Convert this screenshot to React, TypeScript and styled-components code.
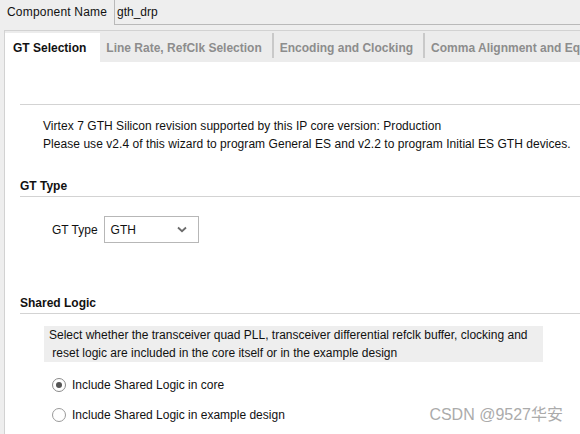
import React from "react";
import styled, { createGlobalStyle } from "styled-components";

const GlobalStyle = createGlobalStyle`
  html, body {
    margin: 0;
    padding: 0;
    background: #eeeeee;
    overflow: hidden;
  }
  body {
    font-family: "Liberation Sans", Arial, sans-serif;
    font-size: 12px;
    color: #111;
  }
`;

const Page = styled.div`
  position: relative;
  width: 580px;
  height: 434px;
  overflow: hidden;
`;

const TopBar = styled.div`
  display: flex;
  height: 25px;
`;

const NameLabel = styled.div`
  padding-left: 7px;
  width: 107px;
  line-height: 24px;
  letter-spacing: 0.2px;
`;

const NameInput = styled.div`
  flex: 1;
  border-left: 1px solid #b9b9b9;
  border-bottom: 1px solid #b9b9b9;
  padding-left: 2px;
  line-height: 24px;
`;

const Panel = styled.div`
  margin: 5px 0 0 4px;
  border-top: 1px solid #d2d2d2;
  border-left: 1px solid #d2d2d2;
  height: 420px;
  background: #fff;
  display: flex;
  flex-direction: column;
`;

const TabStrip = styled.div`
  display: flex;
  background: #ececec;
  padding-top: 2px;
  height: 29px;
  white-space: nowrap;
  overflow: hidden;
`;

const Tab = styled.div<{ $active?: boolean }>`
  position: relative;
  display: flex;
  align-items: center;
  padding: 0 ${(p) => (p.$active ? 14 : 12)}px 0 ${(p) => (p.$active ? 8 : 6)}px;
  font-weight: bold;
  color: ${(p) => (p.$active ? "#111" : "#8d8d8d")};
  background: ${(p) => (p.$active ? "#fff" : "transparent")};

  &::after {
    content: "";
    display: ${(p) => (p.$active ? "none" : "block")};
    position: absolute;
    right: 0;
    top: 0;
    height: 25px;
    width: 2px;
    background: #c9c9c9;
  }
  &:last-child::after {
    display: none;
  }
`;

const Body = styled.div`
  padding-left: 15px;
`;

const SectionHeading = styled.div<{ $top: number }>`
  margin-top: ${(p) => p.$top}px;
  height: 18px;
  line-height: 18px;
  padding-bottom: 1px;
  font-weight: bold;
  border-bottom: 1px solid #d3d3d3;
`;

const Intro = styled.div`
  margin: 12px 0 0 23px;
  line-height: 18px;
  letter-spacing: 0.05px;
`;

const FieldRow = styled.div`
  display: flex;
  align-items: center;
  margin: 19px 0 0 32px;
  gap: 6px;
`;

const Combo = styled.div`
  box-sizing: border-box;
  width: 95px;
  height: 27px;
  border: 1px solid #b7b7b7;
  display: flex;
  align-items: center;
  justify-content: space-between;
  padding: 0 11px 0 6px;
`;

const Note = styled.div`
  margin: 12px 0 0 24px;
  width: 499px;
  background: #eeeeee;
  line-height: 18px;
  padding-left: 5px;
  box-sizing: border-box;
  white-space: pre;
`;

const RadioRow = styled.label<{ $gap: number }>`
  display: flex;
  align-items: center;
  gap: 6px;
  margin: ${(p) => p.$gap}px 0 0 32px;
  line-height: 18px;
`;

const RadioDot = styled.span<{ $checked?: boolean }>`
  box-sizing: border-box;
  width: 14px;
  height: 14px;
  border-radius: 50%;
  border: 1px solid ${(p) => (p.$checked ? "#8a8a8a" : "#9a9a9a")};
  background: #fff;
  display: flex;
  align-items: center;
  justify-content: center;

  &::after {
    content: "";
    display: ${(p) => (p.$checked ? "block" : "none")};
    width: 6px;
    height: 6px;
    border-radius: 50%;
    background: #555;
  }
`;

const Watermark = styled.div`
  position: absolute;
  right: 17px;
  bottom: 9px;
  font-family: "Liberation Sans", "Noto Sans CJK SC", sans-serif;
  font-size: 16px;
  color: #ababab;
`;

const Chevron = () => (
  <svg width="10" height="7" viewBox="0 0 10 7">
    <path d="M1 1.5 L5 5.2 L9 1.5" fill="none" stroke="#6b6b6b" strokeWidth="1.8" />
  </svg>
);

export default function App() {
  return (
    <Page>
      <GlobalStyle />
      <TopBar>
        <NameLabel>Component Name</NameLabel>
        <NameInput>gth_drp</NameInput>
      </TopBar>
      <Panel>
        <TabStrip>
          <Tab $active>GT Selection</Tab>
          <Tab>Line Rate, RefClk Selection</Tab>
          <Tab>Encoding and Clocking</Tab>
          <Tab>Comma Alignment and Equalization</Tab>
        </TabStrip>
        <Body>
          <SectionHeading $top={23} />
          <Intro>
            Virtex 7 GTH Silicon revision supported by this IP core version: Production
            <br />
            Please use v2.4 of this wizard to program General ES and v2.2 to program Initial ES GTH devices.
          </Intro>
          <SectionHeading $top={24}>GT Type</SectionHeading>
          <FieldRow>
            <span>GT Type</span>
            <Combo>
              <span>GTH</span>
              <Chevron />
            </Combo>
          </FieldRow>
          <SectionHeading $top={51}>Shared Logic</SectionHeading>
          <Note>
            {"Select whether the transceiver quad PLL, transceiver differential refclk buffer, clocking and\n reset logic are included in the core itself or in the example design"}
          </Note>
          <RadioRow $gap={14}>
            <RadioDot $checked />
            Include Shared Logic in core
          </RadioRow>
          <RadioRow $gap={12}>
            <RadioDot />
            Include Shared Logic in example design
          </RadioRow>
        </Body>
      </Panel>
      <Watermark>CSDN @9527华安</Watermark>
    </Page>
  );
}
